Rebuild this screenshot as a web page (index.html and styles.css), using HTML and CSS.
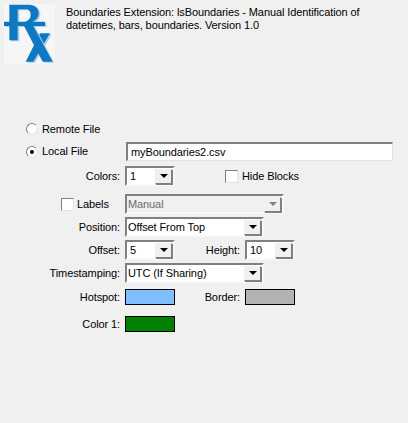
FILE: index.html
```html
<!DOCTYPE html>
<html lang="en">
<head>
    <meta charset="UTF-8">
    <title>Boundaries Extension</title>
    <link rel="stylesheet" href="styles.css">
</head>
<body>

    <header class="head">
        <svg class="logo" viewBox="0 0 195 210" width="65" height="70">
            <rect x="12" y="12" width="153" height="180" fill="#f6f6f6"/>
            <defs>
                <path id="r-part" fill-rule="evenodd" d="M28 14H88C106 14 116 25 116 40C116 52 108 61 97 65H135V78H100L158 185H128L72 78H53V121H28V78H12V65H28ZM53 28V65H76C87 62 92 54 92 45C92 35 87 28 78 28Z"/>
                <path id="x-part" d="M120 100H150L100 185H77Z"/>
            </defs>
            <use href="#x-part" fill="#a9d0ea" x="5" y="3"/>
            <use href="#x-part" fill="#0f78c2"/>
            <use href="#r-part" fill="#a9d0ea" x="5" y="3"/>
            <use href="#r-part" fill="#0f78c2"/>
        </svg>
        <p class="desc">Boundaries Extension: lsBoundaries - Manual Identification of<br>datetimes, bars, boundaries. Version 1.0</p>
    </header>

    <div class="form">
        <div class="row radio-row">
            <span class="radio"></span>
            <span>Remote File</span>
        </div>
        <div class="row row-local">
            <div class="radio-cell">
                <span class="radio on"></span>
                <span>Local File</span>
            </div>
            <div class="input">myBoundaries2.csv</div>
        </div>
        <div class="row row-colors">
            <span class="lbl">Colors:</span>
            <div class="select small"><span class="val">1</span><span class="arrow"></span></div>
            <span class="check hide-check"></span>
            <span>Hide Blocks</span>
        </div>
        <div class="row row-labels">
            <div class="check-cell">
                <span class="check"></span>
                <span>Labels</span>
            </div>
            <div class="select wider off"><span class="val">Manual</span><span class="arrow"></span></div>
        </div>
        <div class="row row-tight">
            <span class="lbl">Position:</span>
            <div class="select wide"><span class="val">Offset From Top</span><span class="arrow"></span></div>
        </div>
        <div class="row row-tight">
            <span class="lbl">Offset:</span>
            <div class="select small"><span class="val">5</span><span class="arrow"></span></div>
            <span class="lbl2">Height:</span>
            <div class="select small"><span class="val">10</span><span class="arrow"></span></div>
        </div>
        <div class="row row-tight">
            <span class="lbl">Timestamping:</span>
            <div class="select wide"><span class="val">UTC (If Sharing)</span><span class="arrow"></span></div>
        </div>
        <div class="row row-hotspot">
            <span class="lbl">Hotspot:</span>
            <div class="swatch blue"></div>
            <span class="lbl2">Border:</span>
            <div class="swatch grey"></div>
        </div>
        <div class="row row-color1">
            <span class="lbl">Color 1:</span>
            <div class="swatch green"></div>
        </div>
    </div>

</body>
</html>
```

FILE: styles.css
```css
body { margin: 0; background-color: #f0f0f0; color: #000; font-family: "Liberation Sans", Arial, sans-serif; font-size: 11px; letter-spacing: -0.1px; line-height: 13px; }
.head { display: flex; height: 70px; }
.logo { display: block; flex: none; margin-right: 1px; }
.desc { margin: 6px 0 0; white-space: nowrap; }
.form { padding-top: 51px; }
.row { display: flex; align-items: center; white-space: nowrap; }
.radio-row { height: 16px; padding-left: 26px; }
.row-local { margin-top: 5px; }
.row-colors { margin-top: 5px; }
.row-labels { margin-top: 8px; }
.row-tight { margin-top: 3px; }
.row-hotspot { margin-top: 6px; }
.row-color1 { margin-top: 11px; }
.radio-cell { display: flex; align-items: center; width: 100px; padding-left: 26px; }
.check-cell { display: flex; align-items: center; width: 64px; padding-left: 61px; }
.lbl { width: 120px; margin-right: 5px; text-align: right; }
.lbl2 { width: 60px; margin-left: 5px; margin-right: 5px; text-align: right; }
.radio { box-sizing: border-box; flex: none; display: flex; align-items: center; justify-content: center; width: 12px; height: 12px; margin-right: 4px; border-radius: 50%; background-color: #fff; border: 1px solid; border-color: #808080 #e3e3e3 #e3e3e3 #808080; }
.radio.on::before { content: ""; width: 4px; height: 4px; border-radius: 50%; background-color: #000; }
.check { box-sizing: border-box; flex: none; width: 13px; height: 13px; margin-right: 3px; background-color: #fff; border: 1px solid; border-color: #808080 #e3e3e3 #e3e3e3 #808080; }
.hide-check { margin-left: 50px; margin-right: 4px; }
.input { box-sizing: border-box; width: 267px; height: 19px; padding: 2px 3px; background-color: #fff; border: 1px solid #e3e3e3; border-top: 2px solid #808080; border-left: 2px solid #808080; }
.select { box-sizing: border-box; display: flex; align-items: center; justify-content: space-between; height: 20px; padding-right: 1px; background-color: #fff; border: 2px solid; border-color: #808080 #f8f8f8 #f8f8f8 #808080; }
.select .val { padding-left: 1px; }
.select.small { width: 50px; }
.select.small .val { padding-left: 3px; }
.select.wide { width: 139px; }
.select.wider { width: 159px; }
.select.off { background-color: #f0f0f0; color: #6d6d6d; }
.arrow { box-sizing: border-box; display: flex; align-items: center; justify-content: center; width: 17px; height: 15px; background-color: #f0f0f0; border: 1px solid; border-color: #f0f0f0 #808080 #808080 #f0f0f0; box-shadow: 1px 1px 0 #808080; }
.arrow::before { content: ""; width: 0; height: 0; border-left: 4px solid transparent; border-right: 4px solid transparent; border-top: 4px solid #000; }
.off .arrow::before { border-top-color: #808080; }
.swatch { box-sizing: border-box; width: 50px; height: 16px; border: 1px solid #000; }
.blue { background-color: #80bfff; }
.grey { background-color: #b3b3b3; }
.green { background-color: #008000; }
```
